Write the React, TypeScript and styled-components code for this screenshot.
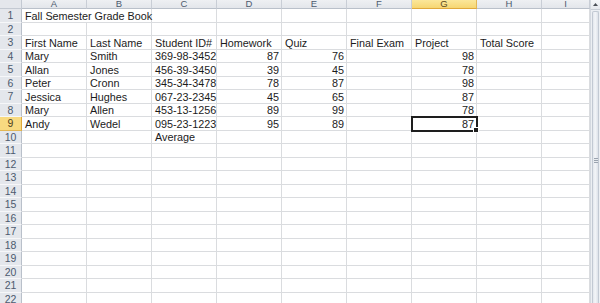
import React from 'react';
import styled, { createGlobalStyle } from 'styled-components';

const GlobalStyle = createGlobalStyle`
  html, body {
    margin: 0;
    padding: 0;
    background: #fff;
    overflow: hidden;
  }
`;

const COLS = ['A', 'B', 'C', 'D', 'E', 'F', 'G', 'H', 'I'];
const SELECTED_COL = 'G';
const SELECTED_ROW = 9;
const ROW_COUNT = 22;

type CellValue = { text: string; num?: boolean; span?: number };

const data: Record<number, Record<string, CellValue>> = {
  1: { A: { text: 'Fall Semester Grade Book', span: 2 } },
  3: {
    A: { text: 'First Name' },
    B: { text: 'Last Name' },
    C: { text: 'Student ID#' },
    D: { text: 'Homework' },
    E: { text: 'Quiz' },
    F: { text: 'Final Exam' },
    G: { text: 'Project' },
    H: { text: 'Total Score' },
  },
  4: { A: { text: 'Mary' }, B: { text: 'Smith' }, C: { text: '369-98-3452' }, D: { text: '87', num: true }, E: { text: '76', num: true }, G: { text: '98', num: true } },
  5: { A: { text: 'Allan' }, B: { text: 'Jones' }, C: { text: '456-39-3450' }, D: { text: '39', num: true }, E: { text: '45', num: true }, G: { text: '78', num: true } },
  6: { A: { text: 'Peter' }, B: { text: 'Cronn' }, C: { text: '345-34-3478' }, D: { text: '78', num: true }, E: { text: '87', num: true }, G: { text: '98', num: true } },
  7: { A: { text: 'Jessica' }, B: { text: 'Hughes' }, C: { text: '067-23-2345' }, D: { text: '45', num: true }, E: { text: '65', num: true }, G: { text: '87', num: true } },
  8: { A: { text: 'Mary' }, B: { text: 'Allen' }, C: { text: '453-13-1256' }, D: { text: '89', num: true }, E: { text: '99', num: true }, G: { text: '78', num: true } },
  9: { A: { text: 'Andy' }, B: { text: 'Wedel' }, C: { text: '095-23-1223' }, D: { text: '95', num: true }, E: { text: '89', num: true }, G: { text: '87', num: true } },
  10: { C: { text: 'Average' } },
};

const Window = styled.div`
  display: flex;
  width: 600px;
  height: 303px;
  overflow: hidden;
  background: #fff;
  font-family: 'Liberation Sans', Arial, sans-serif;
`;

const Grid = styled.div`
  display: grid;
  grid-template-columns: 22px repeat(8, 65px) 48px;
  grid-template-rows: 9px repeat(${ROW_COUNT}, 13.5px);
  width: 590px;
  flex: none;
`;

const Corner = styled.div`
  background: #e4e7ec;
  border-right: 1px solid #c3c9d2;
  border-bottom: 1px solid #c3c9d2;
  box-sizing: border-box;
`;

const ColHeader = styled.div<{ $active?: boolean }>`
  box-sizing: border-box;
  display: flex;
  align-items: flex-end;
  justify-content: center;
  overflow: hidden;
  font-size: 9.5px;
  line-height: 8px;
  color: ${p => (p.$active ? '#5b4a20' : '#4c5a6e')};
  background: ${p =>
    p.$active ? 'linear-gradient(#fbe79a, #f6d672)' : 'linear-gradient(#eef0f3, #e3e6eb)'};
  border-right: 1px solid ${p => (p.$active ? '#e2b755' : '#c9ced6')};
  border-bottom: 1px solid ${p => (p.$active ? '#e0a93c' : '#b9c0ca')};
`;

const RowHeader = styled.div<{ $active?: boolean }>`
  box-sizing: border-box;
  display: flex;
  align-items: center;
  justify-content: center;
  font-size: 10.5px;
  color: ${p => (p.$active ? '#4d3f1c' : '#4c5a6e')};
  background: ${p => (p.$active ? '#f8da80' : '#e4e7ec')};
  border-right: 1px solid ${p => (p.$active ? '#e0a93c' : '#b9c0ca')};
  border-bottom: 1px solid ${p => (p.$active ? '#e2b755' : '#f6f7f9')};
`;

const Cell = styled.div<{ $num?: boolean; $span?: number; $selected?: boolean }>`
  position: relative;
  box-sizing: border-box;
  display: flex;
  align-items: flex-end;
  justify-content: ${p => (p.$num ? 'flex-end' : 'flex-start')};
  padding: ${p => (p.$num ? '0 2px 0 0' : '0 0 0 3px')};
  font-size: 10.8px;
  line-height: 12px;
  color: #1b1b1b;
  white-space: nowrap;
  overflow: visible;
  border-right: 1px solid #dadcdf;
  border-bottom: 1px solid #dadcdf;
  grid-column: ${p => (p.$span ? `span ${p.$span}` : 'auto')};
  ${p =>
    p.$selected &&
    `
    outline: 2px solid #1e1e1e;
    outline-offset: -1px;
    z-index: 2;
    &::after {
      content: '';
      position: absolute;
      right: -3px;
      bottom: -3px;
      width: 4px;
      height: 4px;
      background: #1e1e1e;
      border: 1px solid #fff;
    }
  `}
`;

const ScrollBar = styled.div`
  flex: 1;
  display: flex;
  flex-direction: column;
  background: #eceff3;
  border-left: 1px solid #d4d9e0;
`;

const ArrowButton = styled.div`
  height: 9px;
  display: flex;
  align-items: center;
  justify-content: center;
  background: linear-gradient(#f5f7fa, #e5e9ee);
  border-bottom: 1px solid #c8ced6;
`;

const Thumb = styled.div`
  flex: 1;
  margin: 1px 1px 0 1px;
  display: flex;
  align-items: center;
  justify-content: center;
  background: linear-gradient(90deg, #e3e7ed, #f3f5f8 45%, #dde2e9);
  border: 1px solid #c2c9d3;
  border-bottom: none;
  border-radius: 2px 2px 0 0;
`;

const Grip = styled.div`
  width: 4px;
  height: 5px;
  margin-top: 6px;
  background: repeating-linear-gradient(#9aa3af 0 1px, #e9ecf0 1px 2px);
`;

export default function App() {
  const rows = Array.from({ length: ROW_COUNT }, (_, i) => i + 1);

  return (
    <>
      <GlobalStyle />
      <Window>
        <Grid>
          <Corner />
          {COLS.map(c => (
            <ColHeader key={c} $active={c === SELECTED_COL}>
              {c}
            </ColHeader>
          ))}
          {rows.map(r => {
            const rowData = data[r] || {};
            const cells: React.ReactNode[] = [];
            let skip = 0;
            COLS.forEach(c => {
              if (skip > 0) {
                skip--;
                return;
              }
              const v = rowData[c];
              if (v?.span) skip = v.span - 1;
              cells.push(
                <Cell
                  key={c}
                  $num={v?.num}
                  $span={v?.span}
                  $selected={c === SELECTED_COL && r === SELECTED_ROW}
                >
                  {v?.text}
                </Cell>
              );
            });
            return (
              <React.Fragment key={r}>
                <RowHeader $active={r === SELECTED_ROW}>{r}</RowHeader>
                {cells}
              </React.Fragment>
            );
          })}
        </Grid>
        <ScrollBar>
          <ArrowButton>
            <svg width="5" height="3" viewBox="0 0 5 3">
              <path d="M0 3 L2.5 0 L5 3 Z" fill="#4a4f57" />
            </svg>
          </ArrowButton>
          <Thumb>
            <Grip />
          </Thumb>
        </ScrollBar>
      </Window>
    </>
  );
}
